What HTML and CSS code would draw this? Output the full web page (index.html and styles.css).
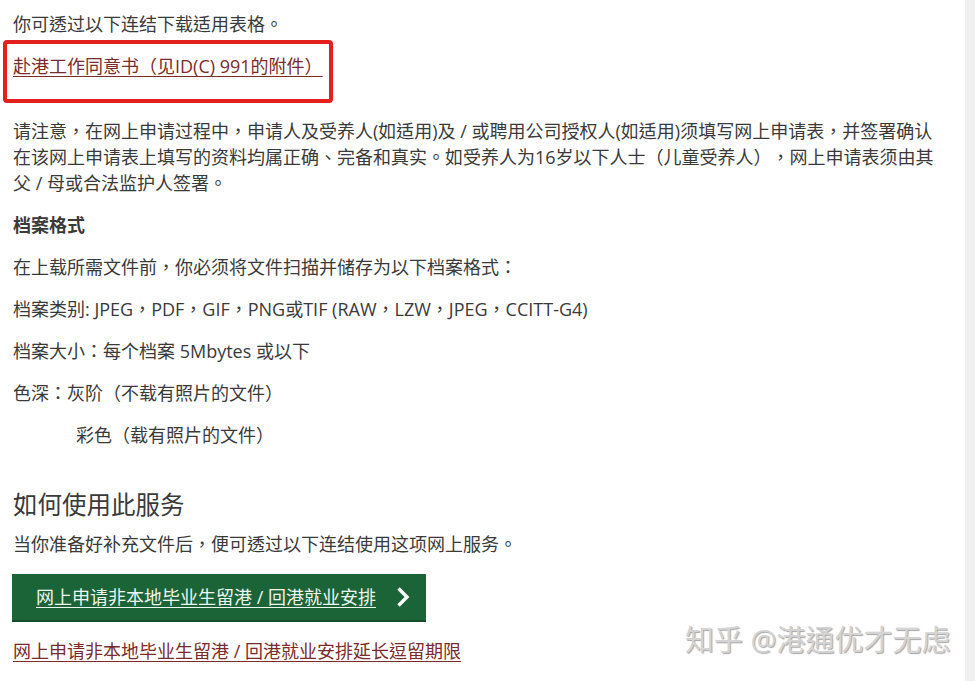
FILE: index.html
```html
<!DOCTYPE html>
<html lang="zh-HK">
<head>
<meta charset="utf-8">
<title>如何使用此服务</title>
<link rel="stylesheet" href="styles.css">
</head>
<body>
<div class="page">
  <main class="content">
    <p class="para first">你可透过以下连结下载适用表格。</p>
    <p class="para download"><a class="link" href="#">赴港工作同意书（见ID(C) 991的附件）</a><span class="highlight"></span></p>
    <p class="para">请注意，在网上申请过程中，申请人及受养人(如适用)及 / 或聘用公司授权人(如适用)须填写网上申请表，并签署确认在该网上申请表上填写的资料均属正确、完备和真实。如受养人为16岁以下人士（儿童受养人），网上申请表须由其父 / 母或合法监护人签署。</p>
    <p class="para bold">档案格式</p>
    <p class="para">在上载所需文件前，你必须将文件扫描并储存为以下档案格式：</p>
    <p class="para">档案类别: JPEG，PDF，GIF，PNG或TIF (RAW，LZW，JPEG，CCITT-G4)</p>
    <p class="para">档案大小：每个档案 5Mbytes 或以下</p>
    <p class="para">色深：灰阶（不载有照片的文件）</p>
    <p class="para indent">彩色（载有照片的文件）</p>
    <h2 class="heading">如何使用此服务</h2>
    <p class="para intro">当你准备好补充文件后，便可透过以下连结使用这项网上服务。</p>
    <a class="button" href="#"><span class="button-text">网上申请非本地毕业生留港 / 回港就业安排</span><svg class="chev" width="14" height="22" viewBox="0 0 14 22"><path d="M2.5 2.5 L11 11 L2.5 19.5" fill="none" stroke="#fff" stroke-width="3.4"/></svg></a>
    <p class="para last"><a class="link" href="#">网上申请非本地毕业生留港 / 回港就业安排延长逗留期限</a></p>
    <div class="watermark">知乎 @港通优才无虑</div>
  </main>
  <div class="strip"></div>
</div>
</body>
</html>
```

FILE: styles.css
```css
html, body {
  margin: 0;
  padding: 0;
  background: #fff;
}
body {
  font-family: "Open Sans", "Noto Sans CJK TC", sans-serif;
  color: #3a3a3a;
  font-size: 18px;
  line-height: 26px;
  text-spacing-trim: space-all;
}
.page {
  display: flex;
  height: 681px;
  overflow: hidden;
}
.content {
  flex: 1;
  position: relative;
  padding: 11px 20px 0 13px;
}
.strip {
  width: 10px;
  background: #f0f0f0;
}
.para {
  margin: 0 0 16px 0;
}
.download {
  position: relative;
  margin-bottom: 39px;
}
.highlight {
  position: absolute;
  left: -10px;
  top: -13px;
  width: 322px;
  height: 55px;
  border: 4px solid #e4201c;
  border-radius: 4px;
}
.link {
  color: #7b2b2b;
  text-decoration: underline;
  text-underline-offset: 3px;
}
.bold {
  font-weight: 700;
}
.indent {
  padding-left: 63px;
}
.heading {
  font-size: 24.5px;
  font-weight: 400;
  line-height: 32px;
  margin: 41px 0 10px 0;
  color: #3a3a3a;
}
.intro {
  margin-bottom: 17px;
}
.button {
  display: inline-flex;
  align-items: center;
  justify-content: space-between;
  box-sizing: border-box;
  width: 414px;
  height: 48px;
  margin-left: -1px;
  padding: 0 16px 0 24px;
  background: #1a6438;
  border-bottom: 2px solid #144d2b;
  color: #eef4ee;
  text-decoration: none;
}
.button-text {
  text-decoration: underline;
  text-underline-offset: 3px;
  font-size: 18px;
}
.chev {
  display: block;
}
.last {
  margin-top: 16px;
}
.watermark {
  position: absolute;
  left: 685px;
  top: 621px;
  font-size: 29px;
  line-height: 38px;
  color: #d4d4d4;
  text-shadow: 1px 1px 1px rgba(0, 0, 0, 0.35);
  white-space: nowrap;
}
```
